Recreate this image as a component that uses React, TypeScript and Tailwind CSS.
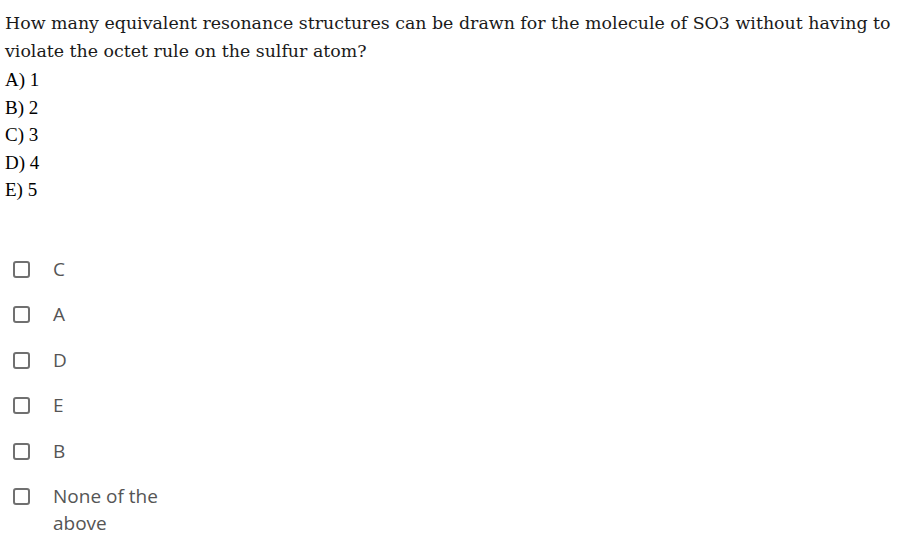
import React from 'react';

const choices = ['A) 1', 'B) 2', 'C) 3', 'D) 4', 'E) 5'];
const answers = ['C', 'A', 'D', 'E', 'B', 'None of the above'];

const App = () => {
    return (
        <div className="bg-white w-[920px] h-[557px] overflow-hidden pl-[5px] pt-[9px]">
            <p className="text-[17.4px] leading-[28px] text-[#1a1a1a] font-['DejaVu_Serif',serif]">
                How many equivalent resonance structures can be drawn for the molecule of SO3 without having to violate the octet rule on the sulfur atom?
            </p>
            <div className="mt-[1px] text-[19px] leading-[27.5px] text-black font-['Liberation_Serif',serif]">
                {choices.map((c) => (
                    <div key={c}>{c}</div>
                ))}
            </div>

            <div className="mt-[52px] flex flex-col gap-[18.5px] pl-[8px]">
                {answers.map((a) => (
                    <label key={a} className="flex items-start gap-[23px]">
                        <span className="mt-[5px] w-[17px] h-[17px] shrink-0 rounded-[3px] border-2 border-[#707070] bg-white" />
                        <span className="w-[130px] text-[19px] leading-[27px] text-[#555555] font-['Open_Sans',sans-serif]">
                            {a}
                        </span>
                    </label>
                ))}
            </div>
        </div>
    );
};

export default App;
